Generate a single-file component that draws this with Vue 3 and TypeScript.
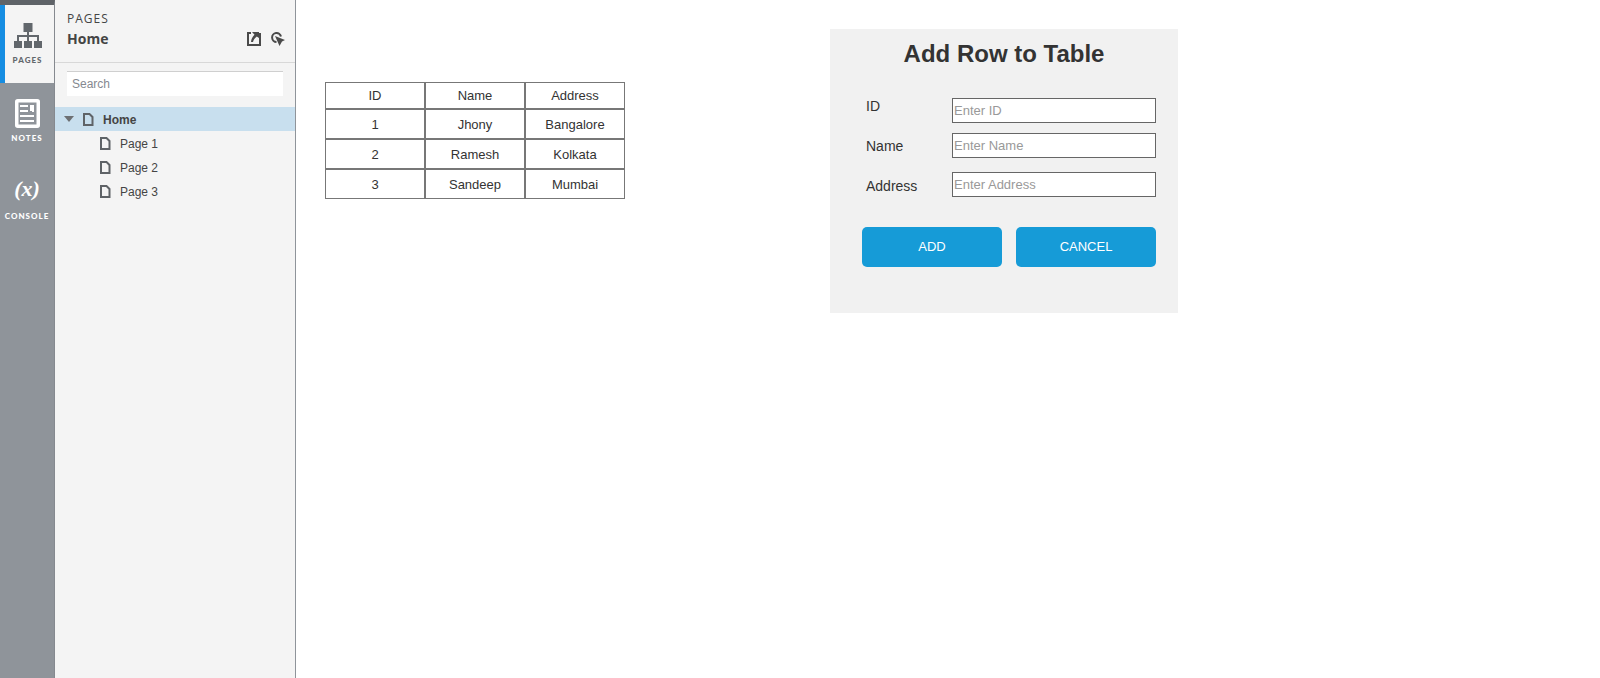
<script setup lang="ts">
import { ref } from 'vue'

interface Row {
  id: string
  name: string
  address: string
}

const rows = ref<Row[]>([
  { id: '1', name: 'Jhony', address: 'Bangalore' },
  { id: '2', name: 'Ramesh', address: 'Kolkata' },
  { id: '3', name: 'Sandeep', address: 'Mumbai' },
])

const pages: string[] = ['Page 1', 'Page 2', 'Page 3']

const fields: { key: keyof Row; label: string }[] = [
  { key: 'id', label: 'ID' },
  { key: 'name', label: 'Name' },
  { key: 'address', label: 'Address' },
]

const draft = ref<Row>({ id: '', name: '', address: '' })
const search = ref('')

function reset(): void {
  draft.value = { id: '', name: '', address: '' }
}

function addRow(): void {
  rows.value.push({ ...draft.value })
  reset()
}
</script>

<template>
  <div class="app">
    <nav class="rail">
      <button class="tab active" type="button">
        <svg class="tab-icon" width="28" height="28" viewBox="0 0 28 28">
          <path d="M9.500 2h9v9h-9zM0 20h8v7H0zM10 20h8v7h-8zM20 20h8v7h-8z" fill="#62676c" />
          <path d="M14 9v12M4 21v-6h20v6" fill="none" stroke="#62676c" stroke-width="2" />
        </svg>
        <span class="tab-label">PAGES</span>
      </button>
      <button class="tab" type="button">
        <svg class="tab-icon" width="25" height="29" viewBox="0 0 25 29">
          <rect x="1.750" y="1.750" width="21.500" height="25.500" rx="1" fill="none" stroke="#fff" stroke-width="3.500" />
          <path d="M5 7h8M5 12h8M5 17h14M5 22h14" stroke="#fff" stroke-width="2" />
          <path d="M15 6h4v7h-2v-1h-2z" fill="#fff" />
        </svg>
        <span class="tab-label">NOTES</span>
      </button>
      <button class="tab" type="button">
        <span class="tab-glyph">(x)</span>
        <span class="tab-label">CONSOLE</span>
      </button>
    </nav>

    <aside class="sidebar">
      <header class="side-head">
        <div class="side-kicker">PAGES</div>
        <div class="side-row">
          <h2 class="side-title">Home</h2>
          <div class="tools">
            <button class="tool" type="button" aria-label="Open in new window">
              <svg width="14" height="14" viewBox="0 0 14 14">
                <path d="M4 1H1v12h12V1" fill="none" stroke="#4a4a4a" stroke-width="2" />
                <path d="M5 0h7v6L9.800 4.500C7.800 6 6.700 7.400 6 10H4c.3-3 1.500-5.200 3.500-7.200z" fill="#4a4a4a" />
              </svg>
            </button>
            <button class="tool" type="button" aria-label="Highlight interactive elements">
              <svg width="14" height="14" viewBox="0 0 14 14">
                <path d="M5.500 10A4.500 4.500 0 1 1 10 4.500" fill="none" stroke="#4a4a4a" stroke-width="2" />
                <path d="M4 4L14 8l-3 1.500L8.500 14z" fill="#4a4a4a" />
              </svg>
            </button>
          </div>
        </div>
      </header>

      <div class="search">
        <input v-model="search" class="search-input" type="text" placeholder="Search" aria-label="Search" />
      </div>

      <ul class="tree">
        <li>
          <a class="node root" href="#home">
            <svg class="caret" width="10" height="6" viewBox="0 0 10 6"><path d="M0 0h10L5 6z" fill="#6d7073" /></svg>
            <svg class="doc" width="11" height="13" viewBox="0 0 11 13">
              <path d="M1 1h5.500L9.500 4v8H1z" fill="none" stroke="#5f6367" stroke-width="2" />
            </svg>
            <span class="node-text">Home</span>
          </a>
          <ul class="children">
            <li v-for="page in pages" :key="page">
              <a class="node" href="#page">
                <svg class="doc" width="11" height="13" viewBox="0 0 11 13">
                  <path d="M1 1h5.500L9.500 4v8H1z" fill="none" stroke="#5f6367" stroke-width="2" />
                </svg>
                <span class="node-text">{{ page }}</span>
              </a>
            </li>
          </ul>
        </li>
      </ul>
    </aside>

    <main class="canvas">
      <table class="grid">
        <thead>
          <tr>
            <th v-for="f in fields" :key="f.key" scope="col">{{ f.label }}</th>
          </tr>
        </thead>
        <tbody>
          <tr v-for="row in rows" :key="row.id">
            <td v-for="f in fields" :key="f.key">{{ row[f.key] }}</td>
          </tr>
        </tbody>
      </table>

      <form class="card" @submit.prevent="addRow">
        <h1 class="card-title">Add Row to Table</h1>
        <div class="fields">
          <div class="labels">
            <label v-for="f in fields" :key="f.key" :for="f.key">{{ f.label }}</label>
          </div>
          <div class="inputs">
            <input
              v-for="f in fields"
              :id="f.key"
              :key="f.key"
              v-model="draft[f.key]"
              class="field"
              type="text"
              :placeholder="'Enter ' + f.label"
            />
          </div>
        </div>
        <div class="actions">
          <button class="action" type="submit">ADD</button>
          <button class="action" type="button" @click="reset">CANCEL</button>
        </div>
      </form>
    </main>
  </div>
</template>

<style>
body {
  margin: 0;
  background: #fff;
}
</style>

<style scoped>
.app {
  display: flex;
  min-height: 100vh;
  font-family: "Liberation Sans", Arial, sans-serif;
  color: #333;
}

.app * {
  box-sizing: border-box;
}

button,
input {
  font-family: inherit;
}

.rail {
  flex: none;
  width: 55px;
  border-top: 5px solid #5f6368;
  border-right: 1px solid #85898f;
  background: #8f949a;
}

.tab {
  display: flex;
  flex-direction: column;
  align-items: center;
  justify-content: space-between;
  width: 100%;
  height: 78px;
  padding: 16px 0 17px;
  border: 0;
  background: none;
  color: #fff;
}

.tab.active {
  padding-right: 4px;
  border-left: 5px solid #168de2;
  background: #f4f4f4;
  color: #62676c;
}

.tab-icon {
  flex: none;
}

.tab-label {
  font: 900 8px/12px Lato, "Open Sans", sans-serif;
  letter-spacing: 1px;
}

.tab-glyph {
  font: italic 700 22px/24px "Liberation Serif", serif;
}

.sidebar {
  flex: none;
  width: 241px;
  border-right: 1px solid #8f949a;
  background: #f4f4f4;
}

.side-head {
  height: 63px;
  padding: 10px 10px 0 12px;
  border-bottom: 1px solid #d8d8d8;
  font-family: "Open Sans", "Noto Sans", sans-serif;
  color: #444;
}

.side-kicker {
  font-size: 12px;
  line-height: 18px;
  letter-spacing: 1px;
}

.side-row {
  display: flex;
  align-items: center;
  justify-content: space-between;
}

.side-title {
  margin: 0;
  font-size: 14px;
  line-height: 22px;
}

.tools {
  display: flex;
  gap: 10px;
}

.tool {
  display: flex;
  padding: 0;
  border: 0;
  background: none;
}

.search {
  padding: 8px 12px 11px;
}

.search-input {
  display: block;
  width: 100%;
  height: 25px;
  padding: 0 5px;
  border: 0;
  border-top: 1px solid #cfcfcf;
  background: #fff;
  font-size: 12px;
}

.search-input::placeholder {
  color: #85898f;
  opacity: 1;
}

.tree,
.children {
  margin: 0;
  padding: 0;
  list-style: none;
}

.node {
  display: flex;
  align-items: center;
  height: 24px;
  padding-left: 45px;
  color: #444;
  font-size: 12px;
  text-decoration: none;
}

.node.root {
  padding-left: 9px;
  background: #c8dfee;
  font-weight: 700;
}

.node-text {
  padding-top: 2px;
}

.caret {
  margin-right: 9px;
}

.doc {
  margin-right: 9px;
}

.canvas {
  display: flex;
  flex: 1;
  align-items: flex-start;
  gap: 205px;
  padding: 29px;
}

.grid {
  flex: none;
  width: 300px;
  margin-top: 53px;
  border-spacing: 0;
  table-layout: fixed;
  font-size: 13px;
  text-align: center;
}

.grid th,
.grid td {
  height: 30px;
  padding: 0;
  border: 1px solid #777;
  font-weight: 400;
}

.grid th {
  height: 27px;
}

.card {
  flex: none;
  width: 348px;
  padding: 11px 22px 46px;
  background: #f1f1f1;
}

.card-title {
  margin: 0 0 30px;
  font-size: 24px;
  line-height: 28px;
  text-align: center;
}

.fields {
  display: flex;
  justify-content: space-between;
  padding-left: 14px;
}

.labels {
  display: flex;
  flex-direction: column;
  gap: 24px;
  font-size: 14px;
  line-height: 16px;
}

.inputs {
  display: flex;
  flex-direction: column;
  width: 204px;
}

.field {
  height: 25px;
  margin-bottom: 10px;
  padding: 0 1px;
  border: 1px solid #666;
  background: #fff;
  font-size: 13px;
}

.field:last-child {
  margin: 4px 0 0;
}

.field::placeholder {
  color: #999;
  opacity: 1;
}

.actions {
  display: flex;
  gap: 14px;
  margin-top: 30px;
  padding-left: 10px;
}

.action {
  flex: 1;
  height: 40px;
  padding: 0 0 2px;
  border: 0;
  border-radius: 5px;
  background: #169bd7;
  color: #fff;
  font-size: 13px;
}
</style>
